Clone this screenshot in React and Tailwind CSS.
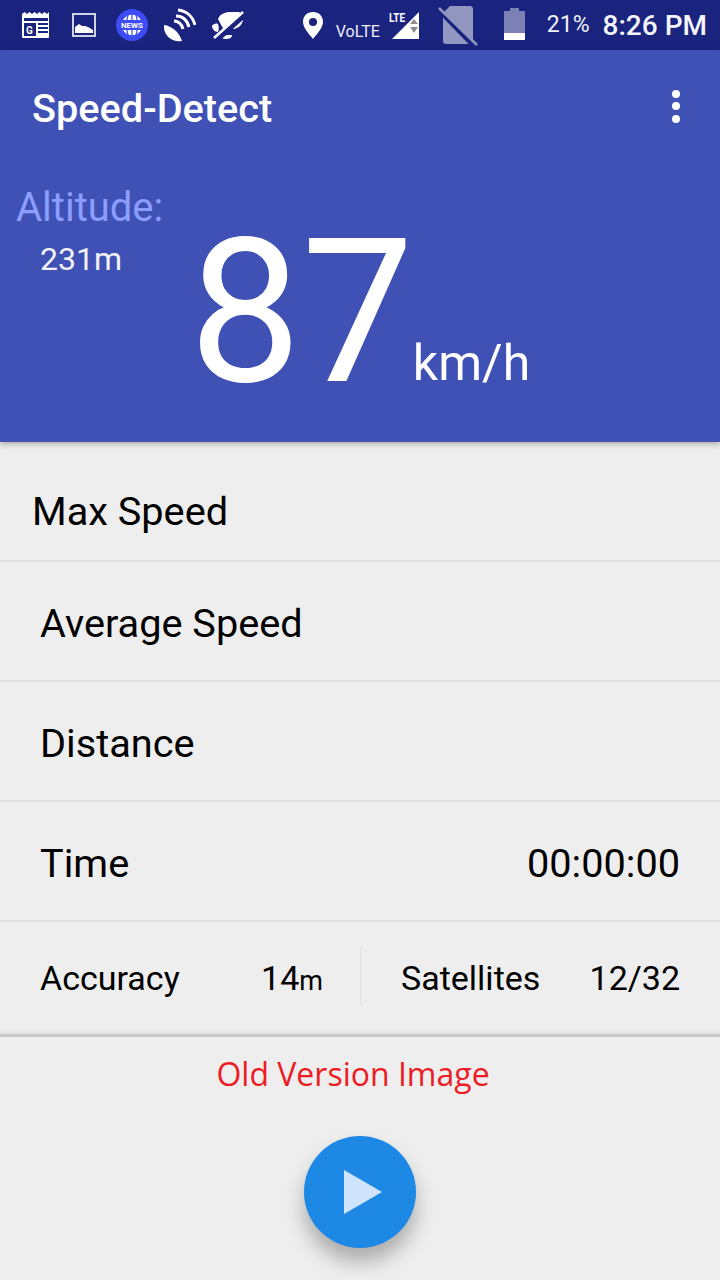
import React from "react";

const Bar = () => (
  <div className="h-[50px] bg-[#1a237e] flex items-center relative text-white shrink-0">
    <div className="flex items-center pl-[21px]">
      <svg width="30" height="28" viewBox="0 0 30 28">
        <path d="M1 3l2.500-2 2.500 2 2.500-2 2.500 2 2.500-2 2.500 2 2.500-2 2.500 2 2.500-2 2.500 2 2-2v25a1 1 0 0 1-1 1H2a1 1 0 0 1-1-1z" fill="#fff" />
        <rect x="3" y="7" width="24" height="3" fill="#1a237e" />
        <rect x="3" y="12" width="12" height="13" fill="#1a237e" />
        <path d="M17 13h10M17 17h10M17 21h10" stroke="#1a237e" strokeWidth="2" />
        <text x="5" y="23" fill="#fff" fontSize="10" fontWeight="700" fontFamily="Roboto, sans-serif">G</text>
      </svg>
      <svg width="24" height="24" viewBox="0 0 24 24" className="ml-[21px]">
        <rect x="1" y="1" width="22" height="22" fill="none" stroke="#d0d2e4" strokeWidth="2" />
        <path d="M3 20v-6l4-3 3 2 3 0 3 1 5 3v3z" fill="#fff" />
      </svg>
      <svg width="32" height="32" viewBox="0 0 32 32" className="ml-[20px]">
        <circle cx="16" cy="16" r="16" fill="#3d4cf5" />
        <path d="M7 11c4-7 14-7 18 0zM7 21c4 7 14 7 18 0z" fill="#fff" />
        <path d="M13 4c-2 4-2 6-2 7M19 4c2 4 2 6 2 7M16 4v7M13 28c-2-4-2-6-2-7M19 28c2-4 2-6 2-7M16 28v-7" stroke="#3d4cf5" strokeWidth="1.200" fill="none" />
        <text x="16" y="19" textAnchor="middle" fill="#fff" fontSize="8" fontWeight="700" fontFamily="Roboto, sans-serif">NEWS</text>
      </svg>
      <svg width="32" height="34" viewBox="0 0 32 34" className="ml-[16px]">
        <path d="M0 17c8 1 15 7 18 16C8 35-1 27 0 17z" fill="#fff" />
        <path d="M10 13c4 0 8 3 9 8M12 8c6 0 11 4 13 11M14 2c9 1 15 7 17 15" stroke="#fff" strokeWidth="3" fill="none" />
      </svg>
      <svg width="32" height="32" viewBox="0 0 32 32" className="ml-[16px]">
        <path d="M6 10C8 5 13 3 18 3h9c4 2 5 7 3 11-2 4-6 6-10 6-3 0-4 1-6 3-2-2-5-7-8-13z" fill="#fff" />
        <path d="M0 17c1-2 4-3 6-2 1 3 1 6 0 8-3 0-6-3-6-6zM8 27c3-1 8-1 12-1 0 3-3 4-6 4-3 0-5-1-6-3z" fill="#fff" />
        <path d="M4 31L32 6" stroke="#1a237e" strokeWidth="6" />
        <path d="M2 29L31 3" stroke="#fff" strokeWidth="2.500" />
      </svg>
    </div>
    <div className="ml-auto flex items-center pr-[13px]">
      <svg width="22" height="28" viewBox="0 0 22 28" className="-ml-[1px]">
        <path fillRule="evenodd" d="M11 1C5 1 1 5 1 11c0 6 7 13 10 17 3-4 10-11 10-17 0-6-4-10-10-10zm0 6a4 4 0 1 1 0 8 4 4 0 0 1 0-8z" fill="#fff" />
      </svg>
      <span className="font-['Roboto',sans-serif] text-[16px] ml-[12px] mt-[13px] text-[#eeeffa]">VoLTE</span>
      <svg width="32" height="30" viewBox="0 0 32 30" className="ml-[8px] -mt-[1px]">
        <path d="M31 2v27H4z" fill="#fff" />
        <path d="M26 9l4 5h-8zM22 17h8l-4 6z" fill="#8e8e8e" />
        <rect x="0" y="0" width="20" height="13" fill="#1a237e" />
        <text x="1" y="12" fill="#fff" fontSize="13" fontWeight="700" fontFamily="Roboto, sans-serif" textLength="16" lengthAdjust="spacingAndGlyphs">LTE</text>
      </svg>
      <svg width="40" height="42" viewBox="0 0 40 42" className="ml-[18px]">
        <path d="M12 2h20a3 3 0 0 1 3 3v32a3 3 0 0 1-3 3H8a3 3 0 0 1-3-3V9z" fill="#9297c2" />
        <path d="M2 7l35 36" stroke="#1a237e" strokeWidth="5" />
        <path d="M1 4l38 37" stroke="#9297c2" strokeWidth="2.500" />
      </svg>
      <svg width="21" height="32" viewBox="0 0 21 32" className="ml-[26px] -mt-[2px]">
        <path d="M6 0h9v3h6v29H0V3h6z" fill="#7b80b5" />
        <rect y="25" width="21" height="7" fill="#fff" />
      </svg>
      <span className="font-['Roboto',sans-serif] text-[23px] ml-[22px] mt-[1px] text-[#f1f2f8]">21%</span>
      <span className="font-['Roboto',sans-serif] text-[28px] font-medium ml-[13px] mt-[1px] text-[#f4f5fa]">8:26 PM</span>
    </div>
  </div>
);

const Row = ({ label, value, pl = "pl-[40px]", pt = "pt-[6px]" }) => (
  <div className={`flex items-center justify-between ${pl} ${pt} pr-[40px] h-[120px] border-b-2 border-[#e0e0e0] text-[39.7px] text-black`}>
    <span>{label}</span>
    {value && <span>{value}</span>}
  </div>
);

const Dot = () => <i className="w-[8px] h-[8px] rounded-full bg-white block" />;

export default function App() {
  return (
    <div className="w-[720px] h-[1280px] bg-[#eeeeee] overflow-hidden flex flex-col font-['Roboto',sans-serif]">
      <Bar />
      <header className="h-[392px] bg-[#3f51b5] shadow-[0_2px_6px_rgba(0,0,0,0.3)] relative z-10 shrink-0 flex flex-col">
        <div className="flex items-center justify-between h-[116px] pl-[32px] pr-[40px]">
          <span className="text-white text-[39.7px] font-medium pt-[2px]">Speed-Detect</span>
          <span className="flex flex-col gap-[4.500px] mt-[-4px]">
            <Dot />
            <Dot />
            <Dot />
          </span>
        </div>
        <div className="flex items-start pl-[16px]">
          <div className="w-[172px]">
            <div className="text-[40px] text-[#8c9eff] leading-[44px] mt-[20px]">Altitude:</div>
            <div className="text-[32px] text-[#f2f3fa] pl-[24px] leading-[40px] mt-[9px]">231m</div>
          </div>
          <span className="text-white text-[200px] leading-[200px] mt-[47px] ml-[1px]">87</span>
          <span className="text-white text-[50px] leading-[56px] mt-[169px] -ml-[1px]">km/h</span>
        </div>
      </header>
      <Row label="Max Speed" pl="pl-[32px]" pt="pt-[22px]" />
      <Row label="Average Speed" />
      <Row label="Distance" />
      <Row label="Time" value="00:00:00" />
      <div className="h-[112px] flex items-center pb-[4px] text-[34px] text-black">
        <div className="w-[361px] h-[58px] border-r border-[#e0e0e0] flex items-center justify-between pt-[4px] pl-[40px] pr-[37px]">
          <span>Accuracy</span>
          <span>14<span className="text-[27px]">m</span></span>
        </div>
        <div className="flex-1 flex items-center justify-between pt-[4px] pl-[40px] pr-[40px]">
          <span>Satellites</span>
          <span>12/32</span>
        </div>
      </div>
      <div className="h-[3px] bg-[#c9c9c9] shrink-0 shadow-[0_-2px_2px_rgba(0,0,0,0.05)]" />
      <div className="text-center text-[32px] text-[#ed1c24] font-['Open_Sans',sans-serif] leading-[44px] mt-[15px] pr-[14px]">Old Version Image</div>
      <button className="w-[112px] h-[112px] mt-[40px] self-center rounded-full bg-[#1e88e5] shadow-[0_14px_20px_rgba(0,0,0,0.28)] flex items-center justify-center">
        <svg width="40" height="46" viewBox="0 0 40 46" className="ml-[5px]">
          <path d="M1 1l38 22L1 45z" fill="#cfe4fa" />
        </svg>
      </button>
    </div>
  );
}
